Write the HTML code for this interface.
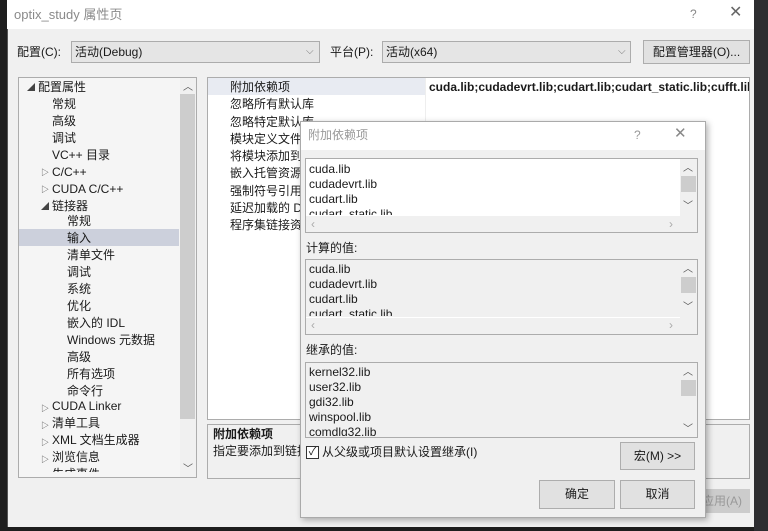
<!DOCTYPE html>
<html><head><meta charset="utf-8"><style>
*{margin:0;padding:0;box-sizing:border-box}
body{width:768px;height:531px;background:#1e1e1e;position:relative;overflow:hidden;font-family:"Liberation Sans","Noto Sans CJK SC",sans-serif;font-size:12px;color:#1a1a1a}
.a{position:absolute}
.t{position:absolute;white-space:nowrap;line-height:15px}
.box{position:absolute;border:1px solid #acacac}
.btn{position:absolute;background:#e1e1e1;border:1px solid #adadad;text-align:center;white-space:nowrap}
.sb{position:absolute;background:#f0f0f0}
.ar{position:absolute;font-size:8px;color:#444;line-height:17px}
</style></head><body>
<div class="a" style="left:0;top:0;width:7px;height:531px;background:#1e1e1e"></div>
<div class="a" style="left:754px;top:0;width:14px;height:531px;background:#2d2d30"></div>
<div class="a" style="left:7px;top:0;width:747px;height:527px;background:#f0f0f0;border-left:1px solid #555"></div>
<div class="a" style="left:7px;top:0;width:747px;height:29px;background:#fff"></div>
<div class="t" style="left:14px;top:7px;font-size:13px;color:#8a8a8a">optix_study 属性页</div>
<div class="t" style="left:690px;top:7px;color:#888">?</div>
<div class="t" style="left:729px;top:5px;font-size:16px;color:#666">✕</div>

<div class="t" style="left:17px;top:45px">配置(C):</div>
<div class="box" style="left:71px;top:41px;width:249px;height:22px;background:#e5e5e5"></div>
<div class="t" style="left:75px;top:45px">活动(Debug)</div>
<div class="t" style="left:306px;top:44px;color:#777;font-size:10px">⌵</div>
<div class="t" style="left:330px;top:45px">平台(P):</div>
<div class="box" style="left:382px;top:41px;width:249px;height:22px;background:#e5e5e5"></div>
<div class="t" style="left:386px;top:45px">活动(x64)</div>
<div class="t" style="left:618px;top:44px;color:#777;font-size:10px">⌵</div>
<div class="btn" style="left:643px;top:40px;width:107px;height:24px;line-height:22px">配置管理器(O)...</div>

<div class="box" style="left:18px;top:77px;width:179px;height:401px;background:#f5f5f5"></div>
<div class="sb" style="left:180px;top:78px;width:16px;height:399px"></div>
<div class="a" style="left:180px;top:94px;width:15px;height:325px;background:#cdcdcd"></div>
<div class="t" style="left:183px;top:80px;font-size:10px;color:#555">︿</div>
<div class="t" style="left:183px;top:462px;font-size:10px;color:#555">﹀</div>
<div class="a" style="left:19px;top:229px;width:160px;height:17px;background:#ccd0dc"></div>
<div class="ar" style="left:27px;top:79px">◢</div>
<div class="t" style="left:38px;top:79px;line-height:17px">配置属性</div>
<div class="t" style="left:52px;top:96px;line-height:17px">常规<br>高级<br>调试<br>VC++ 目录</div>
<div class="ar" style="left:41px;top:164px">▷<br>▷<br>◢</div>
<div class="t" style="left:52px;top:164px;line-height:17px">C/C++<br>CUDA C/C++<br>链接器</div>
<div class="t" style="left:67px;top:213px;line-height:17px">常规<br>输入<br>清单文件<br>调试<br>系统<br>优化<br>嵌入的 IDL<br>Windows 元数据<br>高级<br>所有选项<br>命令行</div>
<div class="ar" style="left:41px;top:400px;height:77px;overflow:hidden">▷<br>▷<br>▷<br>▷<br>▷</div>
<div class="t" style="left:52px;top:398px;line-height:17px;height:79px;overflow:hidden">CUDA Linker<br>清单工具<br>XML 文档生成器<br>浏览信息<br>生成事件</div>
<div class="a" style="left:19px;top:472px;width:160px;height:5px;background:#f5f5f5"></div>

<div class="box" style="left:207px;top:77px;width:543px;height:343px;background:#fff"></div>
<div class="a" style="left:208px;top:78px;width:218px;height:17px;background:#e8ebf2"></div>
<div class="a" style="left:425px;top:78px;width:1px;height:160px;background:#eee"></div>
<div class="t" style="left:230px;top:79px;line-height:17.3px">附加依赖项<br>忽略所有默认库<br>忽略特定默认库<br>模块定义文件<br>将模块添加到程<br>嵌入托管资源<br>强制符号引用<br>延迟加载的 DLL<br>程序集链接资源</div>
<div class="t" style="left:429px;top:80px;font-weight:bold;width:320px;overflow:hidden">cuda.lib;cudadevrt.lib;cudart.lib;cudart_static.lib;cufft.lib</div>
<div class="box" style="left:207px;top:424px;width:543px;height:55px;background:#f0f0f0"></div>
<div class="t" style="left:213px;top:427px;font-weight:bold">附加依赖项</div>
<div class="t" style="left:213px;top:444px">指定要添加到链接</div>
<div class="btn" style="left:694px;top:489px;width:56px;height:24px;line-height:22px;color:#999;background:#ccc;border-color:#ccc">应用(A)</div>

<div class="a" style="left:300px;top:121px;width:406px;height:397px;background:#f0f0f0;border:1px solid #aaa;box-shadow:2px 2px 6px rgba(0,0,0,.3)"></div>
<div class="a" style="left:301px;top:122px;width:404px;height:28px;background:#fff"></div>
<div class="t" style="left:308px;top:128px;color:#999">附加依赖项</div>
<div class="t" style="left:634px;top:128px;color:#999">?</div>
<div class="t" style="left:674px;top:126px;font-size:15px;color:#888">✕</div>

<div class="box" style="left:305px;top:158px;width:393px;height:75px;background:#fff"></div>
<div class="t" style="left:309px;top:162px;height:53px;overflow:hidden">cuda.lib<br>cudadevrt.lib<br>cudart.lib<br>cudart_static.lib</div>
<div class="sb" style="left:306px;top:216px;width:374px;height:16px"></div>
<div class="t" style="left:311px;top:217px;color:#aaa">‹</div><div class="t" style="left:669px;top:217px;color:#aaa">›</div>
<div class="sb" style="left:680px;top:159px;width:17px;height:73px"></div>
<div class="a" style="left:681px;top:176px;width:15px;height:16px;background:#cdcdcd"></div>
<div class="t" style="left:683px;top:161px;font-size:10px;color:#555">︿</div>
<div class="t" style="left:683px;top:199px;font-size:10px;color:#555">﹀</div>

<div class="t" style="left:306px;top:241px">计算的值:</div>
<div class="box" style="left:305px;top:259px;width:393px;height:76px;background:#f0f0f0"></div>
<div class="t" style="left:309px;top:262px;height:54px;overflow:hidden">cuda.lib<br>cudadevrt.lib<br>cudart.lib<br>cudart_static.lib</div>
<div class="a" style="left:306px;top:317px;width:374px;height:1px;background:#fff"></div>
<div class="t" style="left:311px;top:318px;color:#aaa">‹</div><div class="t" style="left:669px;top:318px;color:#aaa">›</div>
<div class="a" style="left:681px;top:277px;width:15px;height:16px;background:#cdcdcd"></div>
<div class="t" style="left:683px;top:262px;font-size:10px;color:#555">︿</div>
<div class="t" style="left:683px;top:300px;font-size:10px;color:#555">﹀</div>

<div class="t" style="left:306px;top:343px">继承的值:</div>
<div class="box" style="left:305px;top:362px;width:393px;height:76px;background:#f0f0f0"></div>
<div class="t" style="left:309px;top:365px;height:71px;overflow:hidden">kernel32.lib<br>user32.lib<br>gdi32.lib<br>winspool.lib<br>comdlg32.lib</div>
<div class="a" style="left:681px;top:380px;width:15px;height:16px;background:#cdcdcd"></div>
<div class="t" style="left:683px;top:365px;font-size:10px;color:#555">︿</div>
<div class="t" style="left:683px;top:422px;font-size:10px;color:#555">﹀</div>

<div class="a" style="left:306px;top:446px;width:13px;height:13px;border:1px solid #333;background:#fff;font-size:11px;line-height:11px;text-align:center">✓</div>
<div class="t" style="left:322px;top:445px">从父级或项目默认设置继承(I)</div>
<div class="btn" style="left:620px;top:442px;width:75px;height:28px;line-height:26px">宏(M) &gt;&gt;</div>
<div class="btn" style="left:539px;top:480px;width:76px;height:29px;line-height:27px">确定</div>
<div class="btn" style="left:620px;top:480px;width:75px;height:29px;line-height:27px">取消</div>
</body></html>
